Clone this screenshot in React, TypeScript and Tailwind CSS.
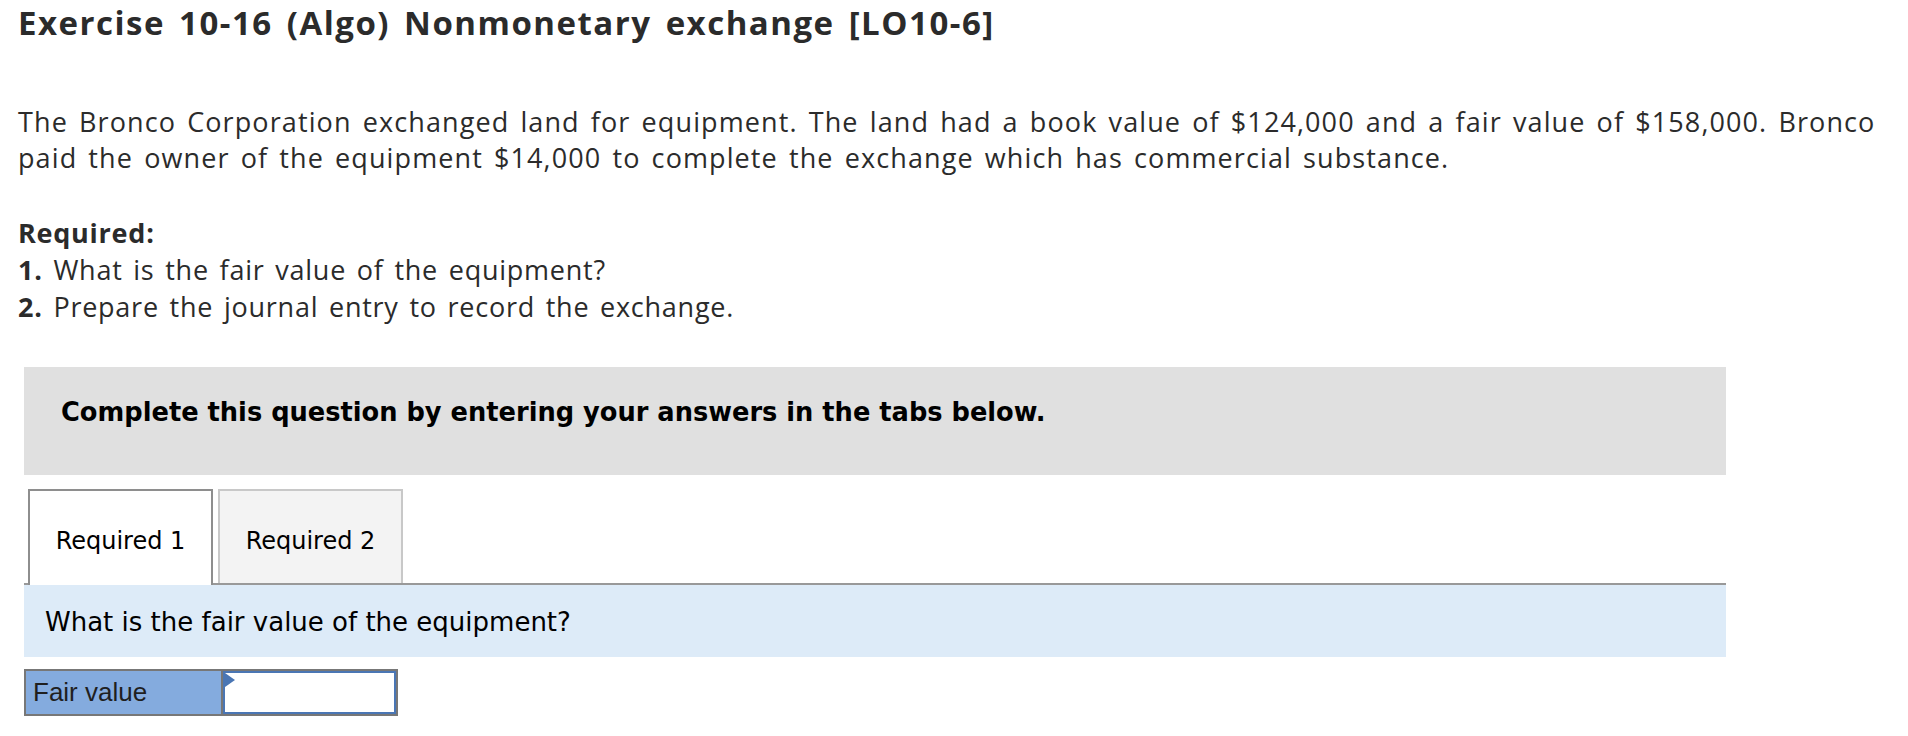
export default function App() {
  const proxima = { fontFamily: "'Open Sans', Lato, sans-serif" };
  return (
    <div className="min-h-screen bg-white pl-[18px] pt-[2px] text-[#2b2b2b]" style={proxima}>
      <h1 className="text-[33px] font-bold leading-[42px] tracking-[1.5px] [word-spacing:4px]">
        Exercise 10-16 (Algo) Nonmonetary exchange [LO10-6]
      </h1>

      <p className="mt-[60px] text-[27px] leading-[36px] tracking-[1.1px] [word-spacing:3px]">
        The Bronco Corporation exchanged land for equipment. The land had a book value of $124,000 and a fair value of
        $158,000. Bronco
        <br />
        paid the owner of the equipment $14,000 to complete the exchange which has commercial substance.
      </p>

      <div className="mt-[38px] text-[27px] leading-[37px] tracking-[0.75px] [word-spacing:3px]">
        <p className="font-bold">Required:</p>
        <p>
          <span className="font-bold">1.</span> What is the fair value of the equipment?
        </p>
        <p>
          <span className="font-bold">2.</span> Prepare the journal entry to record the exchange.
        </p>
      </div>

      <div
        className="ml-[6px] mt-[42px] w-[1702px] text-black"
        style={{ fontFamily: "'DejaVu Sans', Verdana, sans-serif" }}
      >
        <div className="h-[108px] bg-[#e0e0e0] pl-[37px] pt-[30px]">
          <p className="text-[25.7px] font-bold leading-[30px]">
            Complete this question by entering your answers in the tabs below.
          </p>
        </div>

        <div className="mt-[14px] flex gap-[5px] border-b-2 border-[#999999] pl-[4px]">
          <div className="-mb-[2px] flex h-[96px] w-[185px] items-start justify-center border-2 border-b-0 border-[#8e8e8e] bg-white pt-[36px]">
            <span className="text-[24px] leading-[28px]">Required 1</span>
          </div>
          <div className="flex h-[94px] w-[185px] items-start justify-center border-2 border-b-0 border-[#c8c8c8] bg-[#f3f3f3] pt-[36px]">
            <span className="text-[24px] leading-[28px]">Required 2</span>
          </div>
        </div>

        <div className="h-[72px] bg-[#ddebf8] pl-[21px] pt-[22px]">
          <p className="text-[26px] leading-[30px]">What is the fair value of the equipment?</p>
        </div>

        <div className="mt-[12px] flex h-[47px] w-[374px] border-2 border-[#777777]">
          <div
            className="flex w-[197px] items-center border-r-2 border-[#777777] bg-[#84abde] pl-[7px] text-[26px] text-[#1f1f1f]"
            style={{ fontFamily: "'Liberation Sans', Arial, sans-serif" }}
          >
            Fair value
          </div>
          <div className="relative flex-1 border-2 border-[#4a76b4] bg-white">
            <span className="absolute left-0 top-0 h-0 w-0 border-y-[7px] border-l-[10px] border-y-transparent border-l-[#4a76b4]" />
          </div>
        </div>
      </div>
    </div>
  );
}
